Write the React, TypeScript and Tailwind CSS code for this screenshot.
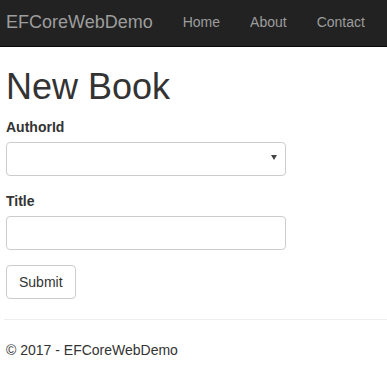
const navLinks = ["Home", "About", "Contact"];

const App = () => {
  return (
    <div className="min-h-screen bg-white font-['Liberation_Sans',Arial,sans-serif] text-[14px] leading-[20px] text-[#333]">
      <nav className="flex h-[47px] items-start border-b border-[#080808] bg-[#222]">
        <a className="pl-[6px] pr-[15px] pt-[12px] text-[18px] leading-[20px] text-[#9d9d9d]">
          EFCoreWebDemo
        </a>
        <ul className="flex">
          {navLinks.map((link) => (
            <li key={link}>
              <a className="block px-[15px] pt-[12px] text-[14px] leading-[20px] text-[#9d9d9d]">
                {link}
              </a>
            </li>
          ))}
        </ul>
      </nav>

      <main className="pl-[6px]">
        <h1 className="mt-[20px] mb-[10px] text-[36px] leading-[1.1] font-normal text-[#333]">
          New Book
        </h1>

        <form className="w-[280px]">
          <div className="mb-[15px]">
            <label className="mb-[5px] inline-block font-bold">AuthorId</label>
            <div className="relative h-[34px] rounded-[4px] border border-[#ccc] bg-white">
              <svg
                className="absolute top-[12px] right-[8px]"
                width="6"
                height="5"
                viewBox="0 0 6 5"
              >
                <path d="M0 0h6L3 5z" fill="#444" />
              </svg>
            </div>
          </div>

          <div className="mb-[15px]">
            <label className="mb-[5px] inline-block font-bold">Title</label>
            <input
              type="text"
              className="block h-[34px] w-full rounded-[4px] border border-[#ccc] bg-white px-[12px] outline-none"
            />
          </div>

          <button
            type="button"
            className="h-[34px] rounded-[4px] border border-[#ccc] bg-white px-[12px] text-[14px] text-[#333]"
          >
            Submit
          </button>
        </form>
      </main>

      <hr className="mt-[20px] mb-[20px] ml-[4px] border-t border-[#eee]" />

      <footer className="pl-[6px]">
        <p>© 2017 - EFCoreWebDemo</p>
      </footer>
    </div>
  );
};

export default App;
